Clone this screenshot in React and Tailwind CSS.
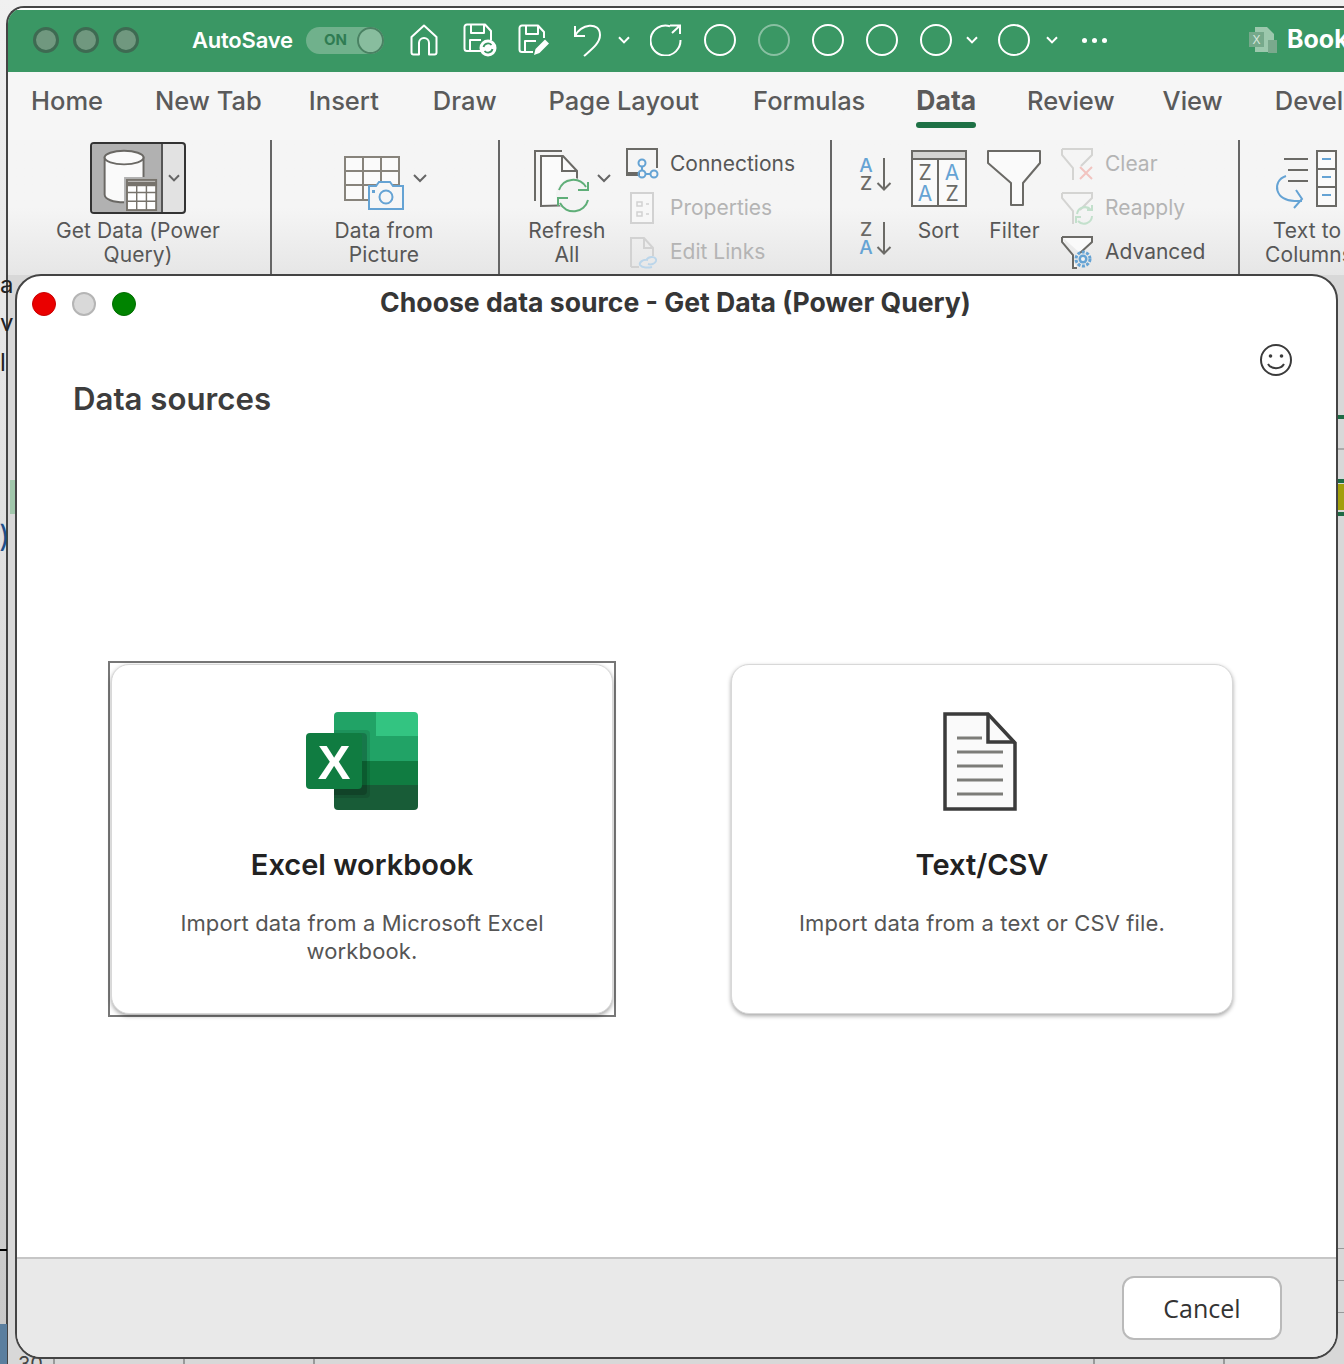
const INK = "#6b6a66";
const BLUE = "#65a3d4";

function Chevron({ className = "", color = "#ffffff" }) {
  return (
    <svg viewBox="0 0 12 8" className={`h-2 w-3 shrink-0 ${className}`} fill="none" stroke={color} strokeWidth="2">
      <path d="M1 1.2 6 6.4 11 1.2" />
    </svg>
  );
}

function Ring({ className = "" }) {
  return <div className={`h-8 w-8 shrink-0 rounded-full border-2 border-white ${className}`} />;
}

function Light({ className = "" }) {
  return <div className={`h-[26px] w-[26px] shrink-0 rounded-full border-[3px] border-[#3e6a52] bg-[#70987f] ${className}`} />;
}

function TitleBar() {
  return (
    <div className="flex h-[62px] items-center bg-[#3a9764] pb-[2px] pl-[25px]">
      <Light />
      <Light className="ml-[14px]" />
      <Light className="ml-[14px]" />
      <span className="ml-[53px] w-[100px] shrink-0 text-[22px] font-semibold tracking-[-0.01em] text-white">AutoSave</span>
      <div className="relative ml-[14px] flex h-[27px] w-[78px] shrink-0 items-center rounded-full bg-[#70b18c] pl-[18px]">
        <span className="text-[15px] font-bold text-[#2f7c53]">ON</span>
        <div className="absolute right-0 top-0 h-[27px] w-[27px] rounded-full border-2 border-[#4a8263] bg-[#88bd9e]" />
      </div>
      <svg viewBox="0 0 28 32" className="ml-[26px] h-8 w-7 shrink-0" fill="none" stroke="#fff" strokeWidth="2" strokeLinejoin="round">
        <path d="M1.5 13 14 1.5 26.5 13v15.5a2 2 0 0 1-2 2H19V19a5 5 0 0 0-10 0v11.500H3.500a2 2 0 0 1-2-2z" />
      </svg>
      <svg viewBox="0 0 34 34" className="ml-[25px] h-[34px] w-[34px] shrink-0" fill="none" stroke="#fff" strokeWidth="2" strokeLinejoin="round">
        <path d="M19 28H4a2.500 2.500 0 0 1-2.500-2.500V4A2.500 2.500 0 0 1 4 1.500h18L28 8v9" />
        <path d="M8 2v8h13V2M7 28V17h11" />
        <circle cx="25" cy="25" r="8.500" fill="#fff" stroke="none" />
        <path d="M20.500 24a4.600 4.600 0 0 1 8-2M29.500 26a4.600 4.600 0 0 1-8 2" stroke="#3a9764" strokeWidth="1.800" />
      </svg>
      <svg viewBox="0 0 32 32" className="ml-[21px] h-8 w-8 shrink-0" fill="none" stroke="#fff" strokeWidth="2" strokeLinejoin="round">
        <path d="M15 28H4a2.500 2.500 0 0 1-2.500-2.500V4A2.500 2.500 0 0 1 4 1.500h16L26 8v6" />
        <path d="M8 2v8h12V2M7 28V17h11" />
        <path d="M16 31l1.500-6L27 15.500l4 4L21.500 29z" fill="#fff" stroke="none" />
      </svg>
      <svg viewBox="0 0 30 34" className="ml-[22px] h-[34px] w-[30px] shrink-0" fill="none" stroke="#fff" strokeWidth="2">
        <path d="M3 13C8 1 28-2 28 12c0 8-8 14-16 21" />
        <path d="M3 3v10h10" />
      </svg>
      <Chevron className="ml-[16px]" />
      <svg viewBox="0 0 32 32" className="ml-[20px] h-8 w-8 shrink-0" fill="none" stroke="#fff" strokeWidth="2">
        <path d="M20 2.200A15 15 0 1 0 30.500 16" />
        <path d="M20 1.500 30 1.500 30 10M30 1.500 22 9" />
      </svg>
      <Ring className="ml-[22px]" />
      <Ring className="ml-[22px] opacity-40" />
      <Ring className="ml-[22px]" />
      <Ring className="ml-[22px]" />
      <Ring className="ml-[22px]" />
      <Chevron className="ml-[14px]" />
      <Ring className="ml-[20px]" />
      <Chevron className="ml-[16px]" />
      <div className="ml-[24px] flex w-[25px] shrink-0 justify-between">
        <span className="h-[5px] w-[5px] rounded-full bg-white" />
        <span className="h-[5px] w-[5px] rounded-full bg-white" />
        <span className="h-[5px] w-[5px] rounded-full bg-white" />
      </div>
      <svg viewBox="0 0 32 28" className="ml-[142px] h-7 w-8 shrink-0">
        <path d="M6 1h12l7 7v18H6z" fill="#9cc8ad" />
        <rect x="0" y="6" width="15" height="15" fill="#76a98b" />
        <text x="7.500" y="18" textAnchor="middle" fontSize="12" fontFamily="Liberation Sans" fill="#d5e7db">X</text>
        <rect x="19" y="14" width="9" height="13" fill="#7aa98d" />
      </svg>
      <span className="ml-[6px] shrink-0 text-[25px] font-bold text-white">Book1</span>
    </div>
  );
}

function Tabs() {
  return (
    <div className="flex h-[68px] items-center bg-[#f6f6f6] pb-[10px] pl-[23px] text-[25.5px] font-medium text-[#5a5a5a]">
      <span className="shrink-0">Home</span>
      <span className="ml-[52px] shrink-0">New Tab</span>
      <span className="ml-[47px] shrink-0">Insert</span>
      <span className="ml-[54px] shrink-0">Draw</span>
      <span className="ml-[52px] shrink-0">Page Layout</span>
      <span className="ml-[54px] shrink-0">Formulas</span>
      <span className="relative ml-[51px] shrink-0 text-[26.5px] font-bold">
        Data
        <span className="absolute -bottom-[7px] left-0 h-[6px] w-full rounded-full bg-[#1e7145]" />
      </span>
      <span className="ml-[51px] shrink-0">Review</span>
      <span className="ml-[48px] shrink-0">View</span>
      <span className="ml-[52px] shrink-0">Developer</span>
    </div>
  );
}

function BigLabel({ children, className = "" }) {
  return <div className={`text-center text-[21px] leading-6 tracking-[0.005em] text-[#575757] ${className}`}>{children}</div>;
}

function SmallRow({ icon, label, muted = false }) {
  return (
    <div className="flex h-[44px] items-center">
      <div className="h-9 w-9 shrink-0">{icon}</div>
      <span className={`ml-[10px] whitespace-nowrap text-[21px] ${muted ? "text-[#b4b4b4]" : "text-[#575757]"}`}>{label}</span>
    </div>
  );
}

function GetDataButton() {
  return (
    <div className="flex h-[72px] w-[96px] overflow-hidden rounded-[4px] border-2 border-[#333] bg-[#e2e2e2]">
      <div className="h-full w-[71px] border-r-2 border-[#555] bg-[#b1b1b1]">
        <svg viewBox="0 0 71 68" className="h-[68px] w-[69px]">
          <path d="M13 13v38c0 5 9 8 20 8s20-3 20-8V13z" fill="#fafafa" stroke="#6a6864" strokeWidth="2" />
          <ellipse cx="33" cy="13" rx="20" ry="7" fill="#fafafa" stroke="#6a6864" strokeWidth="2" />
          <rect x="33" y="33" width="33" height="34" fill="#b1b1b1" />
          <rect x="36" y="36" width="30" height="31" fill="#fff" stroke="#77736c" strokeWidth="2" />
          <path d="M36 40h30" stroke="#77736c" strokeWidth="5" />
          <path d="M36 49h30M36 58h30M46 41v26M56 41v26" stroke="#77736c" strokeWidth="1.500" />
        </svg>
      </div>
      <div className="flex flex-1 items-center justify-center">
        <Chevron color="#666" />
      </div>
    </div>
  );
}

function DataFromPictureIcon() {
  return (
    <svg viewBox="340 140 90 79" className="h-[79px] w-[90px]" fill="none">
      <path d="M345 157h54v43h-54z" fill="#fafafa" stroke="#87837b" strokeWidth="2" />
      <path d="M345 171h54M345 185h54M363 157v43M381 157v43" stroke="#87837b" strokeWidth="2" />
      <path d="M369 186h7l3-4h11l3 4h10v23h-34z" fill="#f6f6f6" stroke={BLUE} strokeWidth="2" />
      <circle cx="386" cy="197" r="6.500" stroke={BLUE} strokeWidth="2" />
      <path d="M372 190h3v3h-3z" fill={BLUE} />
      <path d="M414 175l6 6 6-6" stroke="#666" strokeWidth="2" />
    </svg>
  );
}

function RefreshIcon() {
  return (
    <svg viewBox="524 140 90 79" className="h-[79px] w-[90px]" fill="none">
      <path d="M535 201v-50h27" stroke={INK} strokeWidth="2" />
      <path d="M541 206v-50h22l14 15v34z" fill="#fafafa" stroke={INK} strokeWidth="2" />
      <path d="M562 156v15h15" stroke={INK} strokeWidth="2" />
      <circle cx="573" cy="195" r="17" fill="#f4f4f4" />
      <path d="M559 190a15 15 0 0 1 27-3M588 200a15 15 0 0 1-28 3" stroke="#5fae78" strokeWidth="2" />
      <path d="M578 190h10v-8M568 198h-10v8" stroke="#5fae78" strokeWidth="2" />
      <path d="M598 175l6 6 6-6" stroke="#666" strokeWidth="2" />
    </svg>
  );
}

function ConnectionsIcon() {
  return (
    <svg viewBox="624 146 36 36" className="h-9 w-9" fill="none">
      <path d="M640 175h-13v-26h30v19" stroke={INK} strokeWidth="2" />
      <path d="M627 173h13" stroke={INK} strokeWidth="2" />
      <circle cx="642" cy="163" r="3.500" stroke={BLUE} strokeWidth="2" />
      <circle cx="642" cy="174" r="3.500" stroke={BLUE} strokeWidth="2" />
      <circle cx="654" cy="174" r="3.500" stroke={BLUE} strokeWidth="2" />
      <path d="M642 166.500v4M645.500 174h5" stroke={BLUE} strokeWidth="2" />
    </svg>
  );
}

function PropertiesIcon() {
  return (
    <svg viewBox="624 188 36 36" className="h-9 w-9" fill="none" stroke="#d2d2d2" strokeWidth="2">
      <path d="M631 191h22v30h-22z" fill="#f7f7f7" />
      <path d="M637 200h5v4h-5zM637 210h5v4h-5zM646 202h3M646 212h3" strokeWidth="1.500" />
    </svg>
  );
}

function EditLinksIcon() {
  return (
    <svg viewBox="624 232 36 36" className="h-9 w-9" fill="none">
      <path d="M631 265v-29h13l9 10v8M631 265h8M644 236v10h9" stroke="#d2d2d2" strokeWidth="2" />
      <path d="M646 258c4-5 11-3 10 1-1 3-5 4-8 3M648 258c-6-1-9 3-8 5 2 3 8 3 12 2" stroke="#bcd6ea" strokeWidth="2" />
    </svg>
  );
}

function SortPairIcon({ down = true }) {
  const top = down ? { t: "A", c: BLUE } : { t: "Z", c: INK };
  const bottom = down ? { t: "Z", c: INK } : { t: "A", c: BLUE };
  return (
    <svg viewBox="0 0 36 36" className="h-9 w-9" fill="none">
      <text x="8" y="17" textAnchor="middle" fontSize="19" fontWeight="500" fontFamily="Inter" fill={top.c}>{top.t}</text>
      <text x="8" y="35" textAnchor="middle" fontSize="19" fontWeight="500" fontFamily="Inter" fill={bottom.c}>{bottom.t}</text>
      <path d="M26 3v32M19.500 28l6.500 6.500 6.500-6.500" stroke={INK} strokeWidth="2" />
    </svg>
  );
}

function SortIcon() {
  return (
    <svg viewBox="908 140 62 79" className="h-[79px] w-[62px]" fill="none">
      <path d="M912 151h54v55h-54z" fill="#fafafa" stroke={INK} strokeWidth="2" />
      <path d="M913 152h52v7h-52z" fill="#d4d4d2" />
      <path d="M912 159h54M938 159v47" stroke={INK} strokeWidth="2" />
      <text x="925" y="180" textAnchor="middle" fontSize="21" fontFamily="Inter" fill={INK}>Z</text>
      <text x="925" y="201" textAnchor="middle" fontSize="21" fontFamily="Inter" fill={BLUE}>A</text>
      <text x="952" y="180" textAnchor="middle" fontSize="21" fontFamily="Inter" fill={BLUE}>A</text>
      <text x="952" y="201" textAnchor="middle" fontSize="21" fontFamily="Inter" fill={INK}>Z</text>
    </svg>
  );
}

function FilterIcon() {
  return (
    <svg viewBox="984 140 60 79" className="h-[79px] w-[60px]" fill="none">
      <path d="M988 151h52v12l-17 20v22h-12v-22l-23-20z" fill="#fafafa" stroke={INK} strokeWidth="2" strokeLinejoin="round" />
    </svg>
  );
}

function ClearIcon() {
  return (
    <svg viewBox="1059 144 36 36" className="h-9 w-9" fill="none">
      <path d="M1062 147h30v6l-11 11M1062 147v6l11 13v12" stroke="#d4d4d2" strokeWidth="2" />
      <path d="M1080 165l12 12M1092 165l-12 12" stroke="#f2c4c0" strokeWidth="2" />
    </svg>
  );
}

function ReapplyIcon() {
  return (
    <svg viewBox="1059 188 36 36" className="h-9 w-9" fill="none">
      <path d="M1062 191h30v5l-12 12M1062 191v5l11 13v13" stroke="#d4d4d2" strokeWidth="2" />
      <path d="M1077 212a8 8 0 0 1 14-4M1092 214a8 8 0 0 1-14 5M1087 208h5v-5M1081 215h-5v6" stroke="#c3e0cc" strokeWidth="2" />
    </svg>
  );
}

function AdvancedIcon() {
  return (
    <svg viewBox="1059 232 36 36" className="h-9 w-9" fill="none">
      <path d="M1062 235h30v5l-12 11M1062 235v5l11 13v13h4" fill="#fafafa" stroke={INK} strokeWidth="2" />
      <circle cx="1083" cy="257" r="7" stroke={BLUE} strokeWidth="3" strokeDasharray="3 1.500" />
      <circle cx="1083" cy="257" r="4.500" fill={BLUE} />
      <circle cx="1083" cy="257" r="2" fill="#f2f2f2" />
    </svg>
  );
}

function TextToColumnsIcon() {
  return (
    <svg viewBox="1270 140 74 79" className="h-[79px] w-[74px]" fill="none">
      <path d="M1284 159h24M1288 170h20M1288 181h20" stroke={INK} strokeWidth="2" />
      <path d="M1317 151h19v55h-19z" fill="#fafafa" stroke={INK} strokeWidth="2" />
      <path d="M1317 169h19M1317 187h19" stroke={INK} strokeWidth="2" />
      <path d="M1322 159h9M1322 177h9M1322 195h9" stroke={BLUE} strokeWidth="2" />
      <path d="M1286 176c-15 5-11 26 10 25h6M1296 190l6 9-8 9" stroke={BLUE} strokeWidth="2" />
    </svg>
  );
}

function Ribbon() {
  return (
    <div className="flex h-[135px] bg-gradient-to-b from-[#f5f5f5] from-50% to-[#e6e6e6]">
      <div className="flex w-[264px] shrink-0 flex-col items-center border-r-2 border-[#666] pr-[2px] pt-[2px]">
        <GetDataButton />
        <BigLabel className="mt-[5px]">Get Data (Power<br />Query)</BigLabel>
      </div>
      <div className="flex w-[228px] shrink-0 flex-col items-center border-r-2 border-[#666]">
        <DataFromPictureIcon />
        <BigLabel className="pr-[2px]">Data from<br />Picture</BigLabel>
      </div>
      <div className="flex w-[332px] shrink-0 border-r-2 border-[#666] pl-[24px]">
        <div className="flex w-[90px] shrink-0 flex-col items-center">
          <RefreshIcon />
          <BigLabel className="pr-[4px]">Refresh<br />All</BigLabel>
        </div>
        <div className="ml-[10px] pt-[2px]">
          <SmallRow icon={<ConnectionsIcon />} label="Connections" />
          <SmallRow icon={<PropertiesIcon />} label="Properties" muted />
          <SmallRow icon={<EditLinksIcon />} label="Edit Links" muted />
        </div>
      </div>
      <div className="flex w-[408px] shrink-0 border-r-2 border-[#666] pl-[26px]">
        <div className="flex w-[36px] shrink-0 flex-col gap-[28px] pt-[15px]">
          <SortPairIcon />
          <SortPairIcon down={false} />
        </div>
        <div className="ml-[14px] flex w-[62px] shrink-0 flex-col items-center">
          <SortIcon />
          <BigLabel className="pr-[1px]">Sort</BigLabel>
        </div>
        <div className="ml-[14px] flex w-[60px] shrink-0 flex-col items-center">
          <FilterIcon />
          <BigLabel className="pl-[1px]">Filter</BigLabel>
        </div>
        <div className="ml-[15px] pt-[2px]">
          <SmallRow icon={<ClearIcon />} label="Clear" muted />
          <SmallRow icon={<ReapplyIcon />} label="Reapply" muted />
          <SmallRow icon={<AdvancedIcon />} label="Advanced" />
        </div>
      </div>
      <div className="flex flex-col pl-[30px]">
        <TextToColumnsIcon />
        <BigLabel className="-ml-[5px] w-[84px] whitespace-nowrap">Text to<br />Columns</BigLabel>
      </div>
    </div>
  );
}

function ExcelLogo() {
  return (
    <svg viewBox="306 712 112 98" className="h-[98px] w-[112px]">
      <path d="M376 712h-38a4 4 0 0 0-4 4v20h42z" fill="#21a366" />
      <path d="M376 712h38a4 4 0 0 1 4 4v20h-42z" fill="#33c481" />
      <path d="M334 736h84v25h-84z" fill="#21a366" />
      <path d="M334 761h84v24h-84z" fill="#107c41" />
      <path d="M334 785h84v21a4 4 0 0 1-4 4h-76a4 4 0 0 1-4-4z" fill="#185c37" />
      <path d="M334 730h32a4 4 0 0 1 4 4v60a4 4 0 0 1-4 4h-32z" fill="#000" opacity=".1" />
      <path d="M334 733h29a4 4 0 0 1 4 4v54a4 4 0 0 1-4 4h-29z" fill="#000" opacity=".18" />
      <rect x="306" y="733" width="56" height="56" rx="4" fill="#107c41" />
      <text x="334" y="779" textAnchor="middle" fontSize="49" fontWeight="700" fontFamily="Liberation Sans" fill="#fff">X</text>
    </svg>
  );
}

function CsvIcon() {
  return (
    <svg viewBox="943 712 78 102" className="h-[102px] w-[78px]" fill="none">
      <path d="M945 714h43l27 29v66h-70z" fill="#fafafa" stroke="#3b3b3b" strokeWidth="3.500" />
      <path d="M988 714v28h27" stroke="#3b3b3b" strokeWidth="3.500" />
      <path d="M957 738h25M957 752h46M957 766h46M957 780h46M957 794h46" stroke="#7c7c78" strokeWidth="3" />
    </svg>
  );
}

function SourceCard({ icon, title, text, selected = false }) {
  return (
    <div className={`h-[356px] w-[508px] shrink-0 border-2 p-px ${selected ? "border-[#777]" : "border-transparent"}`}>
      <div className="flex h-[350px] flex-col items-center rounded-[18px] border border-[#d8d8d8] bg-white pt-[47px] shadow-[0_2px_4px_rgba(0,0,0,0.35)]">
        <div className="h-[102px]">{icon}</div>
        <h3 className="mt-[33px] text-[29px] font-semibold leading-[36px] text-[#222]">{title}</h3>
        <p className="mt-[26px] w-[400px] text-center text-[22px] leading-[28px] tracking-[0.006em] text-[#555]">{text}</p>
      </div>
    </div>
  );
}

function Dialog() {
  return (
    <div className="absolute left-[15px] top-[274px] flex h-[1085px] w-[1323px] flex-col overflow-hidden rounded-[26px] border-2 border-[#444] bg-white">
      <div className="relative flex h-[57px] shrink-0 items-center justify-center pb-[4px] pr-[2px]">
        <div className="absolute left-[15px] top-[16px] flex gap-4">
          <span className="h-6 w-6 rounded-full border border-[#c80000] bg-[#ea0000]" />
          <span className="h-6 w-6 rounded-full border-2 border-[#b5b5b5] bg-[#d9d9d9]" />
          <span className="h-6 w-6 rounded-full border border-[#006d00] bg-[#008300]" />
        </div>
        <h1 className="whitespace-nowrap text-[26.6px] font-bold text-[#363636]">Choose data source - Get Data (Power Query)</h1>
      </div>
      <div className="flex h-[924px] shrink-0 flex-col">
        <div className="flex justify-end pr-[43px] pt-[10px]">
          <svg viewBox="0 0 34 34" className="h-[34px] w-[34px]" fill="none" stroke="#3b3b3b" strokeWidth="2">
            <circle cx="17" cy="17" r="15" />
            <circle cx="11.500" cy="13" r="1.800" fill="#3b3b3b" stroke="none" />
            <circle cx="22.500" cy="13" r="1.800" fill="#3b3b3b" stroke="none" />
            <path d="M9 21c3 5.500 13 5.500 16 0" />
          </svg>
        </div>
        <h2 className="ml-[56px] mt-[2px] text-[31.2px] font-semibold leading-10 text-[#3d3d3d]">Data sources</h2>
        <div className="ml-[91px] mt-[242px] flex gap-[112px]">
          <SourceCard selected icon={<ExcelLogo />} title="Excel workbook" text="Import data from a Microsoft Excel workbook." />
          <SourceCard icon={<CsvIcon />} title="Text/CSV" text="Import data from a text or CSV file." />
        </div>
      </div>
      <div className="flex flex-1 justify-end border-t-2 border-[#c6c6c6] bg-[#e9e9e9] pr-[54px] pt-[17px]">
        <button className="h-[64px] w-[160px] rounded-[12px] border-2 border-[#bababa] bg-white pt-[2px] font-['Open_Sans',sans-serif] text-[25px] text-[#333]">Cancel</button>
      </div>
    </div>
  );
}

function SheetBehind() {
  return (
    <>
      <span className="absolute left-0 top-[267px] text-[24px] text-[#222]">a</span>
      <span className="absolute left-0 top-[305px] text-[24px] text-[#222]">v</span>
      <span className="absolute left-0 top-[345px] text-[24px] text-[#222]">l</span>
      <span className="absolute -left-[1px] top-[514px] text-[30px] text-[#1e4f8a]">)</span>
      <div className="absolute left-[10px] top-[480px] h-[34px] w-[5px] bg-[#a1c7ab]" />
      <div className="absolute left-0 top-[1249px] h-[2px] w-[7px] bg-black" />
      <div className="absolute left-0 top-[1324px] h-[40px] w-[7px] bg-[#5b7f9f]" />
      <span className="absolute left-[18px] top-[1352px] text-[20px] leading-6 text-[#444]">30</span>
      <div className="absolute left-[53px] top-[1358px] h-[6px] w-[2px] bg-[#999]" />
      <div className="absolute left-[183px] top-[1358px] h-[6px] w-[2px] bg-[#999]" />
      <div className="absolute left-[313px] top-[1358px] h-[6px] w-[2px] bg-[#999]" />
      <div className="absolute left-[1093px] top-[1358px] h-[6px] w-[2px] bg-[#999]" />
      <div className="absolute left-[1223px] top-[1358px] h-[6px] w-[2px] bg-[#999]" />
      <div className="absolute left-[1338px] top-[415px] h-[4px] w-[6px] bg-[#1e6b45]" />
      <div className="absolute left-[1338px] top-[448px] h-[2px] w-[6px] bg-[#aaa]" />
      <div className="absolute left-[1338px] top-[479px] h-[4px] w-[6px] bg-[#1e6b45]" />
      <div className="absolute left-[1338px] top-[484px] h-[26px] w-[6px] bg-[#a29f0b]" />
      <div className="absolute left-[1338px] top-[512px] h-[4px] w-[6px] bg-[#1e6b45]" />
      <div className="absolute left-[1338px] top-[1248px] h-[1px] w-[6px] bg-[#999]" />
      <div className="absolute left-[1338px] top-[1280px] h-[1px] w-[6px] bg-[#999]" />
      <div className="absolute left-[1338px] top-[1312px] h-[1px] w-[6px] bg-[#999]" />
    </>
  );
}

export default function App() {
  return (
    <div className="relative h-[1364px] w-[1344px] overflow-hidden bg-gradient-to-b from-[#f0f0f0] to-[#c8c8c8] font-['Inter',sans-serif]">
      <div className="ml-[6px] mt-[6px] h-[1358px] w-[1338px] overflow-hidden rounded-tl-[18px] border-l-2 border-t-2 border-[#444] bg-[#d8d8d8]">
        <div className="w-[1336px] border-t-2 border-white">
          <TitleBar />
          <Tabs />
          <Ribbon />
        </div>
      </div>
      <SheetBehind />
      <Dialog />
    </div>
  );
}
